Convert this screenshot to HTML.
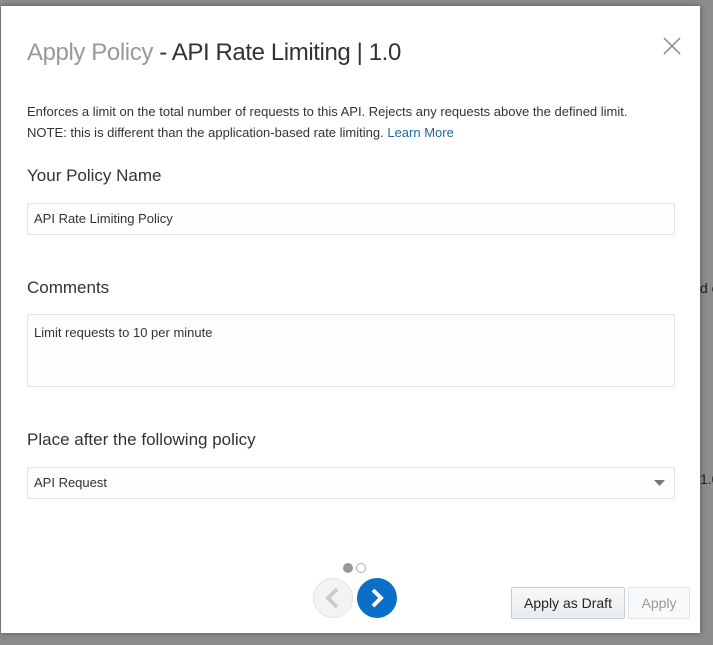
<!DOCTYPE html>
<html><head><meta charset="utf-8"><style>
*{box-sizing:border-box;margin:0;padding:0}
body{width:713px;height:645px;background:#8d8d8d;position:relative;overflow:hidden;font-family:"Liberation Sans",sans-serif;color:#333}
.side{position:absolute;left:700px;width:13px;font-size:14px;color:#222;white-space:nowrap;overflow:hidden}
.dlg{position:absolute;left:1px;top:6px;width:699px;height:627px;background:#fff;box-shadow:0 0 6px rgba(0,0,0,.4)}
.t{position:absolute;left:27px;top:39px;font-size:24px;color:#333;letter-spacing:-.4px}
.t span{color:#999}
.x{position:absolute;left:662px;top:36px;width:20px;height:20px}
.desc{position:absolute;left:27px;top:101px;font-size:13px;line-height:21px;color:#333;width:680px}
.desc a{color:#1f6a9c;text-decoration:none}
.lbl{position:absolute;left:27px;font-size:17px;color:#333}
.in{position:absolute;left:27px;width:648px;border:1px solid #dfe3e6;background:#fcfdfe;font-size:13px;color:#333;padding-left:6px;border-radius:2px}
.dot{position:absolute;width:10px;height:10px;border-radius:50%}
.btn{position:absolute;top:587px;height:32px;border:1px solid #c4ced7;border-radius:2px;font-size:14px;display:flex;align-items:center;justify-content:center}
</style></head><body>
<div class="side" style="top:280px">d c</div>
<div class="side" style="top:471px">1.0</div>
<div class="dlg"></div>
<div class="t"><span>Apply Policy</span> - API Rate Limiting | 1.0</div>
<svg class="x" viewBox="0 0 20 20"><path d="M2 2L18 18M18 2L2 18" stroke="#888" stroke-width="1.5"/></svg>
<div class="desc">Enforces a limit on the total number of requests to this API. Rejects any requests above the defined limit.<br>NOTE: this is different than the application-based rate limiting. <a>Learn More</a></div>
<div class="lbl" style="top:166px">Your Policy Name</div>
<div class="in" style="top:203px;height:32px;line-height:30px">API Rate Limiting Policy</div>
<div class="lbl" style="top:278px">Comments</div>
<div class="in" style="top:314px;height:73px;padding-top:10px">Limit requests to 10 per minute</div>
<div class="lbl" style="top:430px">Place after the following policy</div>
<div class="in" style="top:467px;height:32px;line-height:30px">API Request</div>
<svg style="position:absolute;left:654px;top:480px" width="11" height="7"><path d="M0 0H11L5.5 6Z" fill="#777"/></svg>
<div class="dot" style="left:343px;top:563px;background:#999"></div>
<div class="dot" style="left:356px;top:563px;border:1px solid #aaa;background:#fff"></div>
<div style="position:absolute;left:313px;top:578px;width:40px;height:40px;border-radius:50%;background:#f3f3f3;border:1px solid #e4e4e4"></div>
<svg style="position:absolute;left:313px;top:578px" width="40" height="40"><path d="M24 11L15 20L24 29" stroke="#ccc" stroke-width="4" fill="none"/></svg>
<div style="position:absolute;left:357px;top:578px;width:40px;height:40px;border-radius:50%;background:#0a6fc7"></div>
<svg style="position:absolute;left:357px;top:578px" width="40" height="40"><path d="M16 12L24 20L16 28" stroke="#fff" stroke-width="4" fill="none"/></svg>
<div class="btn" style="left:511px;width:114px;background:linear-gradient(#f7f8f9,#e9ecee);color:#222">Apply as Draft</div>
<div class="btn" style="left:628px;width:62px;background:#f8f9fa;border-color:#e0e4e7;color:#999">Apply</div>
</body></html>
